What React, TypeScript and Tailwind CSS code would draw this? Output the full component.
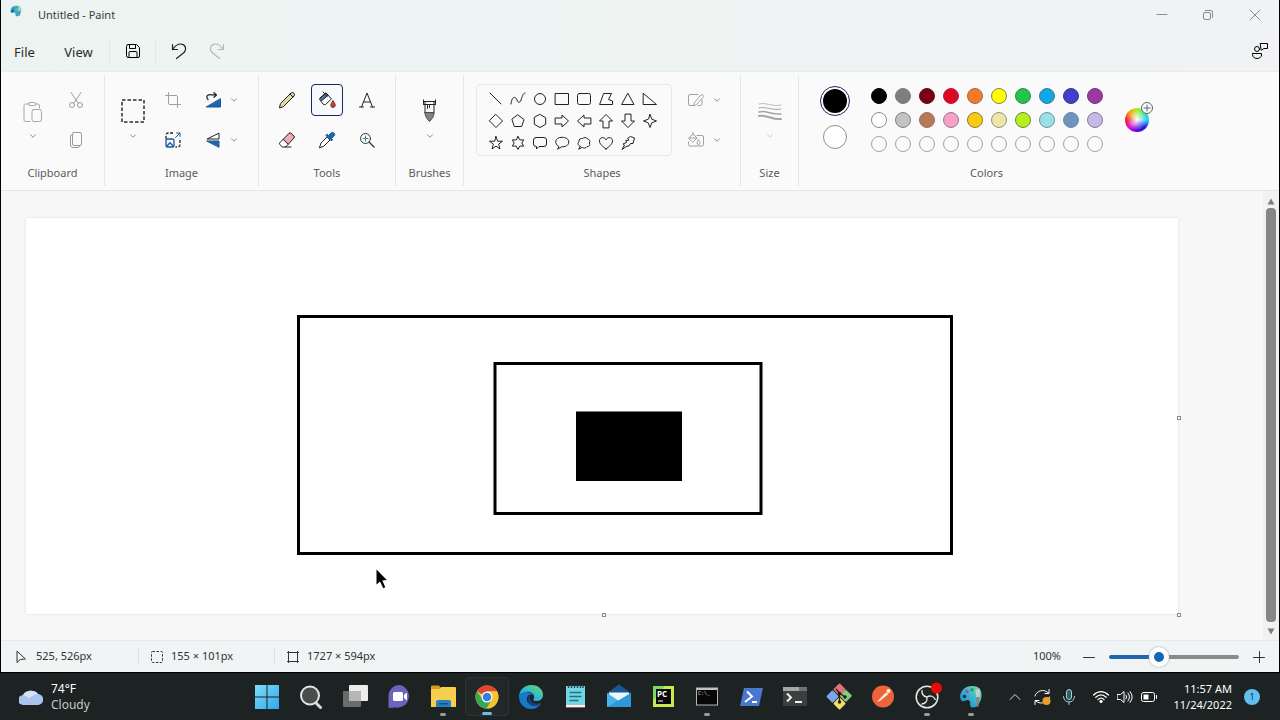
import { useState } from "react";
import type { ReactNode } from "react";
import { ChevronDown, ChevronUp } from "lucide-react";

interface DrawingProps {
  size?: number;
  box?: number;
  className?: string;
  children: ReactNode;
}

// Thin outline drawing, `box` is the side of the view box
function Drawing({ size = 16, box = 16, className = "", children }: DrawingProps) {
  return (
    <svg
      width={size}
      height={size}
      viewBox={`0 0 ${box} ${box}`}
      fill="none"
      stroke="currentColor"
      strokeWidth={1}
      strokeLinecap="round"
      strokeLinejoin="round"
      className={`shrink-0 ${className}`}
      aria-hidden="true"
    >
      {children}
    </svg>
  );
}

function Chevron({ muted = false }: { muted?: boolean }) {
  return (
    <ChevronDown
      size={10}
      strokeWidth={2}
      className={muted ? "text-[#c8c8c8]" : "text-[#777777]"}
      aria-hidden="true"
    />
  );
}

interface GroupProps {
  label: string;
  className: string;
  inset?: string;
  last?: boolean;
  children: ReactNode;
}

function Group({ label, className, inset = "", last, children }: GroupProps) {
  return (
    <section
      aria-label={label}
      className={`my-1 flex shrink-0 flex-col pt-1 ${last ? "" : "border-r border-[#e6e6e6]"} ${className}`}
    >
      <div className={`flex h-20 ${inset}`}>{children}</div>
      <div className="flex h-[26px] items-center justify-center text-[#5c5c5c]">{label}</div>
    </section>
  );
}

function Tool({ label, active, children }: { label: string; active?: boolean; children: ReactNode }) {
  return (
    <div className="flex h-10 w-10 items-center justify-center">
      <button
        type="button"
        aria-label={label}
        aria-pressed={active}
        className={`flex h-8 w-8 items-center justify-center rounded ${
          active ? "border border-[#1b2560] bg-[#f7f9fc]" : ""
        }`}
      >
        {children}
      </button>
    </div>
  );
}

function SplitTool({ label, children }: { label: string; children: ReactNode }) {
  return (
    <button type="button" aria-label={label} className="flex h-10 items-center gap-2 px-1">
      {children}
      <Chevron />
    </button>
  );
}

function TallTool({
  label,
  className,
  muted,
  children,
}: {
  label: string;
  className: string;
  muted?: boolean;
  children: ReactNode;
}) {
  return (
    <button
      type="button"
      aria-label={label}
      className={`flex flex-col items-center justify-end gap-2 pb-[19px] ${className}`}
    >
      {children}
      <Chevron muted={muted} />
    </button>
  );
}

const shapes: { name: string; d: string }[] = [
  { name: "Line", d: "M2 2 L13 13" },
  { name: "Curve", d: "M1 13 C2 5 5 5 7 9 C8 12 10 12 11 9 C12 6 13 2 15 2" },
  { name: "Oval", d: "M8 2.5 a5.5 5.5 0 1 1 0 11 a5.5 5.5 0 1 1 0 -11 Z" },
  { name: "Rectangle", d: "M1.5 2.5 H14.5 V13.5 H1.5 Z" },
  {
    name: "Rounded rectangle",
    d: "M3.5 2.5 H12.5 a2 2 0 0 1 2 2 V11.5 a2 2 0 0 1 -2 2 H3.5 a2 2 0 0 1 -2 -2 V4.5 a2 2 0 0 1 2 -2 Z",
  },
  { name: "Polygon", d: "M6 2.5 H13.5 L10.5 8.5 L14.5 10 V13.5 H2 Z" },
  { name: "Triangle", d: "M8 2.5 L14 13.5 H2 Z" },
  { name: "Right triangle", d: "M1.5 2.5 L14.5 13.5 H1.5 Z" },
  { name: "Diamond", d: "M8 1.5 L14.5 8 L8 14.5 L1.5 8 Z" },
  { name: "Pentagon", d: "M8 2 L14 6.5 L11.7 13.5 H4.3 L2 6.5 Z" },
  { name: "Hexagon", d: "M8 1.5 L13.7 4.7 V11.3 L8 14.5 L2.3 11.3 V4.7 Z" },
  { name: "Right arrow", d: "M1.5 5 H8 V2 L14.5 8 L8 14 V11 H1.5 Z" },
  { name: "Left arrow", d: "M14.5 5 H8 V2 L1.5 8 L8 14 V11 H14.5 Z" },
  { name: "Up arrow", d: "M5 14.5 V8 H1.5 L8 1.5 L14.5 8 H11 V14.5 Z" },
  { name: "Down arrow", d: "M5 1.5 V8 H1.5 L8 14.5 L14.5 8 H11 V1.5 Z" },
  { name: "Four-point star", d: "M8 1.5 L9.8 6.2 L14.5 8 L9.8 9.8 L8 14.5 L6.2 9.8 L1.5 8 L6.2 6.2 Z" },
  {
    name: "Five-point star",
    d: "M8 1.5 L9.6 6.2 H14.5 L10.6 9.2 L12 14 L8 11.1 L4 14 L5.4 9.2 L1.5 6.2 H6.4 Z",
  },
  {
    name: "Six-point star",
    d: "M8 1.5 L9.8 4.9 H13.7 L11.8 8 L13.7 11.1 H9.8 L8 14.5 L6.2 11.1 H2.3 L4.2 8 L2.3 4.9 H6.2 Z",
  },
  {
    name: "Rounded callout",
    d: "M4 2.5 H12 a2.5 2.5 0 0 1 2.5 2.5 V9 a2.5 2.5 0 0 1 -2.5 2.5 H7 L4.5 14 V11.5 H4 a2.5 2.5 0 0 1 -2.5 -2.5 V5 a2.5 2.5 0 0 1 2.5 -2.5 Z",
  },
  {
    name: "Oval callout",
    d: "M4.5 11.3 C0 9 0.5 2.3 8 2.3 C12 2.3 14.8 4.3 14.8 7 C14.8 10.5 11 12 7.5 11.8 L4 14 Z",
  },
  {
    name: "Cloud callout",
    d: "M4 11 C1.5 10.5 1.5 7.5 3 6.8 C2.5 4 5 3 6.5 3.6 C8 1.8 11 2.3 11.4 4 C13.5 4 14.5 6.5 13.4 8 C14.6 10 12.8 12 11 11.6 C10 13.6 7 13.2 6.4 12.2 L3 14 Z",
  },
  {
    name: "Heart",
    d: "M8 14 C5 11.5 1.5 9.5 1.5 5.8 C1.5 2 6.5 1.5 8 4.8 C9.5 1.5 14.5 2 14.5 5.8 C14.5 9.5 11 11.5 8 14 Z",
  },
  {
    name: "Lightning",
    d: "M8 3 L10.5 1.5 L14.5 3 L13 8.5 H10.5 L9 11 H7 L2 14.5 L4.5 10 L3 9 L6.5 7.5 L5.8 5.5 L8.5 5.2 Z",
  },
];

const swatches: { name: string; fill: string; ring: string }[] = [
  { name: "Black", fill: "bg-black", ring: "border-black" },
  { name: "Gray", fill: "bg-[#7f7f7f]", ring: "border-[#7a7a7a]" },
  { name: "Dark red", fill: "bg-[#7d0012]", ring: "border-[#5c1018]" },
  { name: "Red", fill: "bg-[#dc0628]", ring: "border-[#b32038]" },
  { name: "Orange", fill: "bg-[#f47a28]", ring: "border-[#9c6a40]" },
  { name: "Yellow", fill: "bg-[#ffff00]", ring: "border-[#86863c]" },
  { name: "Green", fill: "bg-[#24c44c]", ring: "border-[#3b8550]" },
  { name: "Turquoise", fill: "bg-[#14a6e4]", ring: "border-[#3e7d98]" },
  { name: "Indigo", fill: "bg-[#3f42c6]", ring: "border-[#34388e]" },
  { name: "Purple", fill: "bg-[#9c389e]", ring: "border-[#74347a]" },
  { name: "White", fill: "bg-white", ring: "border-[#8c8c8c]" },
  { name: "Light gray", fill: "bg-[#c3c3c3]", ring: "border-[#808080]" },
  { name: "Brown", fill: "bg-[#b47a5a]", ring: "border-[#a07058]" },
  { name: "Rose", fill: "bg-[#f7a0c8]", ring: "border-[#a07890]" },
  { name: "Gold", fill: "bg-[#fbcb14]", ring: "border-[#8f7c34]" },
  { name: "Light yellow", fill: "bg-[#eee5aa]", ring: "border-[#98937a]" },
  { name: "Lime", fill: "bg-[#b5f01e]", ring: "border-[#73883a]" },
  { name: "Light turquoise", fill: "bg-[#9ae0e8]", ring: "border-[#6d959c]" },
  { name: "Blue-gray", fill: "bg-[#7093bc]", ring: "border-[#6a89ad]" },
  { name: "Lavender", fill: "bg-[#c6b9e8]", ring: "border-[#837d9a]" },
];

const emptySlots = ["1", "2", "3", "4", "5", "6", "7", "8", "9", "10"];

function PaletteMark({ size }: { size: number }) {
  return (
    <svg width={size} height={size} viewBox="0 0 24 24" aria-hidden="true">
      <defs>
        <linearGradient id="palette" x1="0" y1="1" x2="1" y2="0">
          <stop offset="0" stopColor="#1b7fc4" />
          <stop offset="0.55" stopColor="#39b8d0" />
          <stop offset="1" stopColor="#7fe0a0" />
        </linearGradient>
      </defs>
      <path
        d="M13 1 C20 1 23 5 22.5 11 C22 18 18 23 13 22.5 C9.5 22 12.5 17.5 10 15.5 C8 14 6 17 3 16 C-1 14 1 1 13 1 Z"
        fill="url(#palette)"
      />
      <circle cx="5.5" cy="11.5" r="1.8" fill="#17335c" />
      <circle cx="8" cy="6.5" r="1.8" fill="#b8459a" />
      <circle cx="13" cy="4.7" r="1.7" fill="#2f9a56" />
      <path d="M16.5 5 L21 3.5 L20.5 12 H17 Z" fill="#c3cdd0" />
      <path d="M17.5 12 H20 L19.5 22 H18.2 Z" fill="#9a7a68" />
    </svg>
  );
}

function TitleBar() {
  return (
    <header className="flex h-[30px] shrink-0 items-center justify-between">
      <div className="flex items-center gap-4 pl-[9px]">
        <div className="-mt-2">
          <PaletteMark size={12} />
        </div>
        <h1 className="text-[11px] text-[#3a3a3a]">Untitled - Paint</h1>
      </div>
      <div className="flex text-[#8a8a8a]">
        <button type="button" aria-label="Minimize" className="flex h-[30px] w-[46px] items-center justify-center">
          <Drawing size={12} box={12}>
            <path d="M1 5.5 H11" />
          </Drawing>
        </button>
        <button type="button" aria-label="Restore" className="flex h-[30px] w-[46px] items-center justify-center">
          <Drawing size={12} box={12}>
            <rect x="1.5" y="3.5" width="7" height="7" rx="1.5" />
            <path d="M3.5 1.5 H9 Q10.5 1.5 10.5 3 V8.5" />
          </Drawing>
        </button>
        <button type="button" aria-label="Close" className="flex h-[30px] w-12 items-center justify-center">
          <Drawing size={12} box={12}>
            <path d="M1 1 L11 11 M11 1 L1 11" />
          </Drawing>
        </button>
      </div>
    </header>
  );
}

function MenuBar() {
  return (
    <nav className="flex h-[42px] shrink-0 items-center justify-between pr-[11px]">
      <div className="flex items-center text-[13px] text-[#2a2a2a]">
        <button type="button" className="w-[47px] pt-[3px]">
          File
        </button>
        <button type="button" className="w-[61px] pt-[3px]">
          View
        </button>
        <div className="flex h-6 w-[46px] items-center justify-center border-l border-[#e0e6e5]">
          <button type="button" aria-label="Save" className="text-black">
            <Drawing>
              <path d="M1.5 3 Q1.5 1.5 3 1.5 H11.5 L14.5 4.5 V13 Q14.5 14.5 13 14.5 H3 Q1.5 14.5 1.5 13 Z" />
              <path d="M4.5 1.5 V5.5 H10.5 V1.5 M4 14.5 V9.5 Q4 8.5 5 8.5 H11 Q12 8.5 12 9.5 V14.5" />
            </Drawing>
          </button>
        </div>
        <div className="flex h-6 items-center gap-[22px] border-l border-[#e0e6e5] pl-[15px]">
          <button type="button" aria-label="Undo" className="text-[#1f1f1f]">
            <Drawing>
              <path d="M1.5 1.5 V6.5 H6.5 M1.5 6.5 C4 3 7 1 9.5 1 C14.5 1 16 6 13 9.5 L5.5 15.5" strokeWidth="1.2" />
            </Drawing>
          </button>
          <button type="button" aria-label="Redo" className="text-[#b4b8b8]">
            <Drawing>
              <path d="M14.5 1.5 V6.5 H9.5 M14.5 6.5 C12 3 9 1 6.5 1 C1.5 1 0 6 3 9.5 L10.5 15.5" strokeWidth="1.2" />
            </Drawing>
          </button>
        </div>
      </div>
      <button type="button" aria-label="Account" className="text-black">
        <Drawing>
          <circle cx="5" cy="6" r="2.5" />
          <path d="M0.5 10.5 H9.5 V12 C9.5 14 7.5 15.5 5 15.5 C2.5 15.5 0.5 14 0.5 12 Z" />
          <path d="M8.5 0.5 H15.5 V5.5 H12 L9.5 7 Z" />
        </Drawing>
      </button>
    </nav>
  );
}

function Ribbon() {
  return (
    <div className="flex shrink-0 overflow-hidden border-b border-[#e6e6e6] bg-[#fafafa] text-[11px] shadow-[0_-1px_0_#e9eeed]">
      <Group label="Clipboard" className="w-[104px]" inset="pl-[9px]">
        <TallTool label="Paste" className="w-[46px]">
          <Drawing size={22} box={22} className="text-[#a6a6a6]">
            <path d="M8 20.5 H3.5 Q2 20.5 2 19 V4.5 Q2 3 3.5 3 H6.5 M14 3 H16 Q17.5 3 17.5 4.5 V7" />
            <rect x="6.5" y="1.5" width="7.5" height="3" rx="1.5" />
            <rect x="10" y="8.5" width="9.5" height="12" rx="2" />
          </Drawing>
        </TallTool>
        <div className="flex flex-col text-[#9c9c9c]">
          <Tool label="Cut">
            <Drawing size={18} box={18}>
              <path d="M4 1.5 L11.5 12.5 M14 1.5 L6.5 12.5" />
              <circle cx="5" cy="14" r="2.5" />
              <circle cx="13" cy="14" r="2.5" />
            </Drawing>
          </Tool>
          <Tool label="Copy">
            <Drawing>
              <rect x="4.5" y="0.5" width="9" height="13" rx="1.5" />
              <path d="M4.5 2.5 Q2.5 2.5 2.5 4.5 V13 Q2.5 15.5 5 15.5 H10 Q11.5 15.5 12 14" />
            </Drawing>
          </Tool>
        </div>
      </Group>

      <Group label="Image" className="w-[154px]" inset="pl-2">
        <TallTool label="Select" className="w-10">
          <Drawing size={24} box={24} className="text-[#2c2c2c]">
            <rect x="1" y="1" width="22" height="22" strokeWidth="1.5" strokeDasharray="3.5 2" strokeLinecap="butt" />
          </Drawing>
        </TallTool>
        <div className="flex flex-col">
          <Tool label="Crop">
            <Drawing className="text-[#a0a0a0]">
              <path d="M3.5 0.5 V11 Q3.5 12.5 5 12.5 H15.5 M0.5 3.5 H11 Q12.5 3.5 12.5 5 V15.5" />
            </Drawing>
          </Tool>
          <Tool label="Resize">
            <Drawing>
              <path
                d="M1 7 V3.5 Q1 1 3.5 1 H8 M15 8 V12.5 Q15 15 12.5 15 H10.5"
                stroke="#222222"
                strokeWidth="1.3"
                strokeDasharray="3 1.5"
                strokeLinecap="butt"
              />
              <path d="M10.5 5.5 L15 1 M11.5 1 H15 V4.5" stroke="#17599c" />
              <rect x="1" y="7" width="8" height="8" rx="1.5" stroke="#17599c" strokeWidth="1.3" />
              <path d="M1.5 14.5 L5 10.8 L8.5 14.5" stroke="#17599c" strokeWidth="1.3" />
            </Drawing>
          </Tool>
        </div>
        <div className="flex flex-col pl-2">
          <SplitTool label="Rotate">
            <Drawing>
              <path d="M1.5 15 H15.5 V7 Z" fill="#1b66ad" stroke="#1b5a98" />
              <path
                d="M3 7.5 C0 4 3.5 2 6.5 2.8 H11 M9 0.7 L11.5 3 L9 5.3"
                stroke="#222222"
                strokeWidth="1.2"
              />
            </Drawing>
          </SplitTool>
          <SplitTool label="Flip">
            <Drawing>
              <path d="M14 1.5 V7 H2.5 Z" stroke="#222222" />
              <path d="M14 15 V9 H2 Z" fill="#1b66ad" stroke="#1b5a98" />
            </Drawing>
          </SplitTool>
        </div>
      </Group>

      <Group label="Tools" className="w-[137px]" inset="pl-2">
        <div className="grid grid-cols-3">
          <Tool label="Pencil">
            <Drawing size={18} box={18}>
              <path
                d="M1.5 16.5 L2.5 12.5 L13 2 Q14.5 1 16 2.2 Q17 3.5 16 5 L5.5 15.5 Z"
                fill="#e2d7ac"
                stroke="#222222"
              />
              <path d="M12 3 L15 6" stroke="#222222" />
            </Drawing>
          </Tool>
          <Tool label="Fill" active>
            <Drawing size={18} box={18}>
              <path d="M2 7 L8 1.8 L13.5 8 L7.5 13.5 Q6 14 5 13 L2 9 Z" fill="#ffffff" stroke="#222222" />
              <path d="M2.5 7 L8 2 L10 4.3 L4 9.5 Z" fill="#3f7fb8" stroke="#222222" />
              <path d="M5 1 L9 5.5" stroke="#222222" />
              <path
                d="M15 10 C13.5 12 12.8 13 12.8 14.2 A2.2 2.2 0 0 0 17.2 14.2 C17.2 13 16.5 12 15 10 Z"
                fill="#b84832"
                stroke="#7c2c20"
              />
            </Drawing>
          </Tool>
          <Tool label="Text">
            <Drawing className="text-[#222222]">
              <path d="M2.5 15 L8 1 L13.5 15 M4.5 10 H11.5 M0.5 15 H4.5 M11.5 15 H15.5" />
            </Drawing>
          </Tool>
          <Tool label="Eraser">
            <Drawing size={18} box={18}>
              <path
                d="M5 8.5 L11 2.2 Q12 1.5 13 2.2 L16 5 Q16.8 6 16 7 L10 13.5 Z"
                fill="#f2abb5"
                stroke="#222222"
              />
              <path
                d="M5 8.5 L1.8 11.8 Q1 12.8 1.8 13.6 L4.3 16 H7.5 L10 13.5 Z M7 16 H13"
                fill="#ffffff"
                stroke="#222222"
              />
            </Drawing>
          </Tool>
          <Tool label="Color picker">
            <Drawing size={18} box={18}>
              <path d="M1.5 16.5 L3 12 L9 6 L12 9 L6 15 Z" fill="#ffffff" stroke="#222222" />
              <path
                d="M8 4.5 L13.5 10 L14.5 8.5 L13.5 7.5 L16 5 Q17.5 3.5 16 2 Q14.5 0.8 13 2 L10.5 4.5 L9.5 3.5 Z"
                fill="#1b66ad"
                stroke="#1b5a98"
              />
            </Drawing>
          </Tool>
          <Tool label="Magnifier">
            <Drawing className="text-[#333333]">
              <circle cx="6.5" cy="6.5" r="5" />
              <path d="M10.3 10.3 L15 15" strokeWidth="1.3" />
              <path d="M4 6.5 H9 M6.5 4 V9" stroke="#3a8193" />
            </Drawing>
          </Tool>
        </div>
      </Group>

      <Group label="Brushes" className="w-[68px]">
        <TallTool label="Brushes" className="w-full">
          <Drawing size={24} box={24} className="text-[#222222]">
            <path d="M5.5 1 V4.5 M17.5 1 V4.5 M5.5 2.5 H17.5" />
            <path d="M7 2.5 V14 M16 2.5 V14" />
            <path d="M9.5 6.5 V9.5 M11.5 6.5 V8.5" />
            <path d="M7 13.5 H16 C16 17.5 14 20 11.5 22.5 C9 20 7 17.5 7 13.5 Z" fill="#808080" stroke="#4a4a4a" />
            <path d="M5.5 5.5 H17.5" />
          </Drawing>
        </TallTool>
      </Group>

      <Group label="Shapes" className="w-[277px]" inset="pl-3">
        <div className="mt-1 grid h-[72px] grid-cols-8 content-start rounded border border-[#e8e8e8] pt-[3px] pr-[10px] pl-2">
          {shapes.map((shape) => (
            <button
              key={shape.name}
              type="button"
              aria-label={shape.name}
              className="flex h-[22px] w-[22px] items-center justify-center text-[#222222]"
            >
              <Drawing>
                <path d={shape.d} />
              </Drawing>
            </button>
          ))}
        </div>
        <div className="flex flex-col pl-3 text-[#a0a0a0]">
          <SplitTool label="Shape outline">
            <Drawing>
              <path d="M10 2.5 H2 Q0.5 2.5 0.5 4 V12 Q0.5 13.5 2 13.5 H5 M14 8 V12 Q14 13.5 12.5 13.5 H10" />
              <path d="M5.5 13.5 L6.5 10.5 L13 3 Q14.5 2 15.5 3.5 Q16 4.5 15 5.5 L8.5 12.5 Z" />
            </Drawing>
          </SplitTool>
          <SplitTool label="Shape fill">
            <Drawing>
              <path d="M9 3.5 H14 Q15.5 3.5 15.5 5 V12.5 Q15.5 14 14 14 H2 Q0.5 14 0.5 12.5 V10" />
              <path d="M1 6 L5 1.8 L9 6 L5 10 Z M1 6 H9 M5 0.5 V3" />
              <path d="M10.5 8 C9.5 9.5 9 10 9 11 A1.5 1.5 0 0 0 12 11 C12 10 11.5 9.5 10.5 8 Z" />
            </Drawing>
          </SplitTool>
        </div>
      </Group>

      <Group label="Size" className="w-[58px]">
        <TallTool label="Size" className="w-full" muted>
          <Drawing size={24} box={24} className="text-[#a4a4a4]">
            <path d="M1 5 C8 3 14 8 23 6" strokeWidth="0.7" />
            <path d="M1 9 C8 7 14 12 23 10" />
            <path d="M1 13 C8 11 14 16 23 15" strokeWidth="1.5" />
            <path d="M1 17 C8 15 14 21 23 20" strokeWidth="2" />
          </Drawing>
        </TallTool>
      </Group>

      <Group label="Colors" className="w-[375px]" last>
        <div className="flex w-[68px] flex-col items-center gap-[9px] pt-[6px] pl-1">
          <button
            type="button"
            aria-label="Color 1"
            className="flex h-[30px] w-[30px] items-center justify-center rounded-full border border-[#1b2560] bg-white"
          >
            <span className="h-6 w-6 rounded-full bg-black" />
          </button>
          <button type="button" aria-label="Color 2" className="h-6 w-6 rounded-full border border-[#8f8f8f] bg-white" />
        </div>
        <div className="grid grid-cols-10 content-start pt-1">
          {swatches.map((swatch) => (
            <div key={swatch.name} className="flex h-6 w-6 items-center justify-center">
              <button
                type="button"
                aria-label={swatch.name}
                className={`h-4 w-4 rounded-full border ${swatch.fill} ${swatch.ring}`}
              />
            </div>
          ))}
          {emptySlots.map((slot) => (
            <div key={slot} className="flex h-6 w-6 items-center justify-center">
              <button
                type="button"
                aria-label={`Custom color ${slot}`}
                className="h-4 w-4 rounded-full border border-[#a6a6a6]"
              />
            </div>
          ))}
        </div>
        <button type="button" aria-label="Edit colors" className="relative mt-[26px] ml-[18px] h-[26px] w-7">
          <span className="absolute bottom-0 left-0 h-6 w-6 rounded-full bg-[radial-gradient(circle,#ffffff_0%,#ffffff00_60%),conic-gradient(#a8f020,#30e890,#30c8f8,#1818d8,#5808d8,#e010d8,#f02030,#f8a018,#a8f020)]" />
          <span className="absolute -top-1 right-0 flex h-3 w-3 items-center justify-center rounded-full border border-[#666666] bg-[#fafafa] text-[#666666]">
            <Drawing size={8} box={8}>
              <path d="M4 1 V7 M1 4 H7" />
            </Drawing>
          </span>
        </button>
      </Group>
    </div>
  );
}

function Workspace() {
  return (
    <main className="flex min-h-0 flex-1 bg-[#f7f7f7]">
      <div className="min-w-0 flex-1 overflow-hidden pt-[27px] pr-[85px] pl-[25px]">
        <div className="relative bg-white shadow-[0_0_2px_#d8d8d8]">
          <svg viewBox="0 0 1152 396" className="block h-auto w-full" role="img" aria-label="Drawing canvas">
            <rect x="272.5" y="98.5" width="653" height="237" fill="none" stroke="#000000" strokeWidth="3" />
            <rect x="469" y="145.5" width="266" height="150" fill="none" stroke="#000000" strokeWidth="3" />
            <rect x="550" y="193.5" width="106" height="69.5" fill="#000000" />
            <path
              d="M350.5 351.5 V366.5 L354 363.5 L357.3 370.3 L359.3 369.3 L356.3 362.5 L360.8 362 Z"
              fill="#000000"
            />
          </svg>
          <span className="absolute top-1/2 -right-[3px] h-1 w-1 border border-[#8a8a8a] bg-white" />
          <span className="absolute -bottom-[3px] left-1/2 h-1 w-1 border border-[#8a8a8a] bg-white" />
          <span className="absolute -right-[3px] -bottom-[3px] h-1 w-1 border border-[#8a8a8a] bg-white" />
        </div>
      </div>
      <div className="flex w-4 shrink-0 flex-col items-center bg-[#f1f1f1] text-[#7d7d7d]">
        <button type="button" aria-label="Scroll up" className="flex h-[17px] items-center pt-1">
          <svg width="8" height="7" viewBox="0 0 8 7" aria-hidden="true">
            <path d="M4 0.5 L7.5 6.5 H0.5 Z" fill="currentColor" />
          </svg>
        </button>
        <div className="w-[10px] flex-1 rounded-sm bg-[#868686]" />
        <button type="button" aria-label="Scroll down" className="flex h-[18px] items-center">
          <svg width="8" height="7" viewBox="0 0 8 7" aria-hidden="true">
            <path d="M4 6.5 L7.5 0.5 H0.5 Z" fill="currentColor" />
          </svg>
        </button>
      </div>
    </main>
  );
}

function StatusBar() {
  const [zoom, setZoom] = useState(36);

  return (
    <footer className="flex h-8 shrink-0 items-center border-t border-[#e6e9e9] bg-[#f1f4f4] text-[11px] text-[#333333]">
      <div className="flex h-4 w-[138px] items-center gap-2 border-r border-[#dde0e0] pl-[13px]">
        <Drawing size={14} box={14}>
          <path d="M3 1.5 V12.5 L6.3 9.5 L11 9 Z" />
        </Drawing>
        525, 526px
      </div>
      <div className="flex h-4 w-[136px] items-center gap-2 border-r border-[#dde0e0] pl-3">
        <Drawing size={12} box={12}>
          <rect x="0.5" y="0.5" width="11" height="11" rx="1" strokeDasharray="2.5 1.5" strokeLinecap="butt" />
        </Drawing>
        155 × 101px
      </div>
      <div className="flex h-4 items-center gap-2 pl-3">
        <Drawing size={12} box={12}>
          <path d="M1.5 0.5 V11.5 M10.5 0.5 V11.5 M0.5 1.5 H11.5 M0.5 10.5 H11.5" />
        </Drawing>
        1727 × 594px
      </div>
      <div className="ml-auto flex items-center pr-[14px]">
        <span>100%</span>
        <button type="button" aria-label="Zoom out" className="ml-[22px]">
          <Drawing size={12} box={12}>
            <path d="M0.5 6.5 H11.5" />
          </Drawing>
        </button>
        <input
          type="range"
          aria-label="Zoom"
          min={0}
          max={100}
          value={zoom}
          onChange={(e) => setZoom(Number(e.target.value))}
          className="mr-[14px] ml-[14px] h-5 w-[130px] appearance-none bg-transparent [&::-webkit-slider-runnable-track]:h-1 [&::-webkit-slider-runnable-track]:rounded-full [&::-webkit-slider-runnable-track]:bg-[linear-gradient(90deg,#1f68ad_38%,#8a8a8a_38%)] [&::-webkit-slider-thumb]:-mt-2 [&::-webkit-slider-thumb]:h-5 [&::-webkit-slider-thumb]:w-5 [&::-webkit-slider-thumb]:appearance-none [&::-webkit-slider-thumb]:rounded-full [&::-webkit-slider-thumb]:border-[5px] [&::-webkit-slider-thumb]:border-white [&::-webkit-slider-thumb]:bg-[#1367b4] [&::-webkit-slider-thumb]:shadow-[0_0_2px_#999999]"
        />
        <button type="button" aria-label="Zoom in">
          <Drawing size={12} box={12}>
            <path d="M0.5 6.5 H11.5 M6.5 0.5 V11.5" />
          </Drawing>
        </button>
      </div>
    </footer>
  );
}

interface TaskbarApp {
  name: string;
  open?: boolean;
  active?: boolean;
  art: ReactNode;
}

const apps: TaskbarApp[] = [
  {
    name: "Start",
    art: (
      <path
        d="M0 0 H11.5 V11.5 H0 Z M12.5 0 H24 V11.5 H12.5 Z M0 12.5 H11.5 V24 H0 Z M12.5 12.5 H24 V24 H12.5 Z"
        fill="url(#start)"
      />
    ),
  },
  {
    name: "Search",
    art: (
      <>
        <path d="M16 17 L21.5 22.5" stroke="#d8dada" strokeWidth="3" strokeLinecap="round" />
        <circle cx="11" cy="10.5" r="9" fill="#4a4d4d" stroke="#e4e6e6" strokeWidth="2" />
      </>
    ),
  },
  {
    name: "Task view",
    art: (
      <>
        <rect x="6" y="0" width="19" height="16" rx="1" fill="#ececec" />
        <rect x="0" y="6" width="18" height="16" rx="1" fill="#6a6c6c" />
        <rect x="6" y="6" width="12" height="10" fill="#b5b6b6" />
      </>
    ),
  },
  {
    name: "Chat",
    art: (
      <>
        <path d="M12.5 0 A11 11 0 1 1 8.5 22.5 L1.5 23 V11 A11 11 0 0 1 12.5 0 Z" fill="#6b63bd" />
        <rect x="6" y="7" width="10" height="9" rx="1.5" fill="#ffffff" />
        <path d="M17 10 L20 7.5 V15.5 L17 13 Z" fill="#ffffff" />
      </>
    ),
  },
  {
    name: "File Explorer",
    open: true,
    art: (
      <>
        <path d="M0 1.5 Q0 0.5 1 0.5 H8 L10 3 V5 H0 Z" fill="#d89a1c" />
        <path d="M0 4 H8 L10.5 2 H24 Q25 2 25 3 V22 H0 Z" fill="#f6cf50" />
        <path d="M5 22 V17 Q5 15 7 15 H18 Q20 15 20 17 V22 Z" fill="#2580c4" />
        <rect x="8" y="18" width="9" height="1.5" fill="#12508c" />
      </>
    ),
  },
  {
    name: "Chrome",
    open: true,
    active: true,
    art: (
      <>
        <circle cx="12" cy="12" r="11.5" fill="#f4c430" />
        <path d="M12 12 L2 6.3 A11.5 11.5 0 0 1 22 6.3 H12 Z" fill="#df4436" />
        <path d="M2 6.3 L8 15 L12 23.5 A11.5 11.5 0 0 1 2 6.3 Z" fill="#3ba557" />
        <path d="M7 14.8 L12 12 L16.5 15 L11.5 23.5 A11.5 11.5 0 0 1 5 21 Z" fill="#3ba557" />
        <path d="M22 6.5 H12 V12 L17 15 L12 23.5 A11.5 11.5 0 0 0 22 6.5 Z" fill="#f4c430" />
        <circle cx="12" cy="12" r="5.5" fill="#ffffff" />
        <circle cx="12" cy="12" r="4.3" fill="#347fe4" />
      </>
    ),
  },
  {
    name: "Edge",
    art: (
      <>
        <path
          d="M0 12 A12 12 0 0 1 12 0 C20 0 24 5 24 10 C24 14 21 16 17 16 C14 16 14 14.5 15 13 C16 9 11 6 7 7 C3 8 0.5 10 0 12 Z"
          fill="url(#edge)"
        />
        <path
          d="M0 12 C1 7 10 5 14 10 C10 8 7 12 8 16 C10 21 17 21 22 18 C20 22 16 24 12 24 A12 12 0 0 1 0 12 Z"
          fill="#1979c6"
        />
        <path d="M11 10 C7 12 8 20 14 21 C17 21.5 20 20 22 18 C16 20 10 17 11 10 Z" fill="#12407c" />
      </>
    ),
  },
  {
    name: "Notepad",
    art: (
      <>
        <rect x="3" y="1" width="19" height="20" fill="#72d5e3" />
        <path
          d="M5.5 0 V3 M8.5 0 V3 M11.5 0 V3 M14.5 0 V3 M17.5 0 V3 M20 0 V3"
          stroke="#24424c"
          strokeWidth="1.3"
        />
        <path d="M6.5 7.5 H18.5 M6.5 11.5 H18.5 M6.5 15.5 H15.5" stroke="#257088" strokeWidth="1.5" />
        <rect x="3" y="20" width="19" height="2" fill="#f1f5f5" />
        <rect x="3" y="22" width="19" height="1" fill="#bf4a44" />
      </>
    ),
  },
  {
    name: "Mail",
    art: (
      <>
        <path d="M0 8 L12 -0.5 L24 8 V14 H0 Z" fill="#1b5798" />
        <path d="M2 7.5 H22 V17 H2 Z" fill="#eef6fa" />
        <path d="M0 8 L12 16 L24 8 V22 H0 Z" fill="#48b3ea" />
        <path d="M24 8 V22 H0 Z" fill="#2c9ad8" />
      </>
    ),
  },
  {
    name: "PyCharm",
    art: (
      <>
        <rect x="2" y="1" width="21" height="21" fill="#c8ea4c" />
        <path d="M2 1 H14 L2 16 Z" fill="#80d860" />
        <rect x="5" y="4" width="15" height="15" fill="#080a08" />
        <text x="6" y="12" fill="#ffffff" fontSize="8" fontWeight="700" fontFamily="Open Sans, sans-serif">
          PC
        </text>
        <rect x="7" y="15.5" width="5" height="1" fill="#ffffff" />
      </>
    ),
  },
  {
    name: "Command Prompt",
    open: true,
    art: (
      <>
        <rect x="1.5" y="3" width="21" height="17" fill="#080808" stroke="#b4b6b6" />
        <rect x="2" y="3" width="20" height="2" fill="#c0c2c2" />
        <text x="3" y="10" fill="#d8d8d8" fontSize="5" fontFamily="Liberation Mono, monospace">
          C:\_
        </text>
      </>
    ),
  },
  {
    name: "PowerShell ISE",
    art: (
      <>
        <path d="M5 3 H24 L20 21 H1 Z" fill="#4878d0" />
        <path d="M8 6.5 L13 11.5 L6 17 M13 17 H18" stroke="#ffffff" strokeWidth="2" fill="none" />
      </>
    ),
  },
  {
    name: "Terminal",
    art: (
      <>
        <rect x="0" y="2" width="24" height="19" rx="1" fill="#3c3f3f" />
        <path d="M0 2 H16 V6 H0 Z" fill="#a5a7a7" />
        <path d="M16 2 H24 V6 H16 Z" fill="#707272" />
        <path d="M4 8.5 L8 12.5 L4 16.5 M12 17 H19" stroke="#f0f0f0" strokeWidth="2" fill="none" />
      </>
    ),
  },
  {
    name: "Git Bash",
    art: (
      <>
        <rect x="8" y="0" width="9" height="9" rx="1" transform="rotate(45 12.5 4.5)" fill="#e0707c" />
        <rect x="1" y="7" width="9" height="9" rx="1" transform="rotate(45 5.5 11.5)" fill="#78a8e8" />
        <rect x="14" y="7" width="9" height="9" rx="1" transform="rotate(45 19.5 11.5)" fill="#88c87c" />
        <rect x="8" y="14" width="9" height="9" rx="1" transform="rotate(45 12.5 18.5)" fill="#f2dc6c" />
        <path d="M9 4 L12.5 8 V17 M12.5 8 L18 12" stroke="#2c1c1c" strokeWidth="1.3" fill="none" />
        <circle cx="12.5" cy="17" r="1.7" fill="#2c1c1c" />
        <circle cx="18" cy="12" r="1.7" fill="#2c1c1c" />
        <circle cx="12.5" cy="8.5" r="1.7" fill="#2c1c1c" />
      </>
    ),
  },
  {
    name: "Postman",
    art: (
      <>
        <circle cx="12" cy="11.5" r="11" fill="#ee6338" />
        <path d="M6 17 L8.5 14 L15 7.5 L17.5 9 L9.5 15.5 Z" fill="#fff1ea" />
        <circle cx="17.5" cy="6" r="2" fill="#fff1ea" />
      </>
    ),
  },
  {
    name: "OBS Studio",
    open: true,
    art: (
      <>
        <circle cx="12" cy="12" r="10.8" fill="#202424" stroke="#e6e8e8" strokeWidth="1.5" />
        <path
          d="M7 5 C6.5 9 8.5 11.5 12 12 C15 10 19 11 20.5 15 M12 12 C12.5 16 10.5 19 6.5 19"
          fill="none"
          stroke="#e6e8e8"
          strokeWidth="1.3"
        />
        <circle cx="21.5" cy="3" r="5.5" fill="#f00808" />
      </>
    ),
  },
];

function Taskbar() {
  return (
    <div className="flex h-12 shrink-0 border-t border-black bg-[#1d2222] text-[12px] leading-4 text-white">
      <button type="button" className="flex w-[245px] shrink-0 items-center gap-2 pl-[19px] text-left">
        <svg width="24" height="16" viewBox="0 0 24 16" aria-hidden="true">
          <path d="M6 16 A6 5 0 0 1 4 6 A8.5 7 0 0 1 19 5 A5.5 5.5 0 0 1 18.5 16 Z" fill="#a9c4ee" />
          <path d="M4 6 A8.5 7 0 0 1 19 5 C14 5 12 9 9 9 C7 6 5 7 4 6 Z" fill="#d3e2f8" />
        </svg>
        <span>
          <span className="block">74°F</span>
          <span className="block text-[#c4c8c8]">Cloudy</span>
        </span>
      </button>
      <nav aria-label="Apps" className="flex shrink-0">
        <svg width="0" height="0" className="absolute" aria-hidden="true">
          <defs>
            <linearGradient id="start" x1="0" y1="0" x2="1" y2="1">
              <stop offset="0" stopColor="#7fdcf8" />
              <stop offset="1" stopColor="#2ea8ee" />
            </linearGradient>
            <linearGradient id="edge" x1="0" y1="1" x2="1" y2="0">
              <stop offset="0" stopColor="#1d88d0" />
              <stop offset="0.5" stopColor="#34b8d0" />
              <stop offset="1" stopColor="#6cdc60" />
            </linearGradient>
          </defs>
        </svg>
        {apps.map((app) => (
          <button
            key={app.name}
            type="button"
            aria-label={app.name}
            className={`relative my-1 flex w-11 items-center justify-center rounded ${
              app.active ? "border border-[#2f3535] bg-[#222828]" : ""
            }`}
          >
            <svg width="24" height="24" viewBox="0 0 24 24" overflow="visible" aria-hidden="true">
              {app.art}
            </svg>
            {app.open && (
              <span
                className={`absolute bottom-0 left-1/2 h-[3px] -translate-x-1/2 rounded-full ${
                  app.active ? "w-[10px] bg-[#68bde0]" : "w-[6px] bg-[#9a9d9d]"
                }`}
              />
            )}
          </button>
        ))}
        <button type="button" aria-label="Paint" className="relative my-1 flex w-11 items-center justify-center">
          <PaletteMark size={24} />
          <span className="absolute bottom-0 left-1/2 h-[3px] w-[6px] -translate-x-1/2 rounded-full bg-[#9a9d9d]" />
        </button>
      </nav>
      <div className="ml-auto flex shrink-0 items-center pr-5">
        <button type="button" aria-label="Show hidden icons" className="mr-2">
          <ChevronUp size={20} strokeWidth={1} />
        </button>
        <button type="button" aria-label="Updates" className="mr-[10px]">
          <Drawing size={18} box={18}>
            <path d="M2 8 C3 3 11 0 15.5 5 M16 1.5 V5.5 H12 M16.5 9 C16 13 9 18 2.5 13 M2 16.5 V12.5 H6" />
            <circle cx="13.5" cy="13" r="4" fill="#eca02c" stroke="none" />
          </Drawing>
        </button>
        <button type="button" aria-label="Microphone" className="mr-4 text-[#9bd4dd]">
          <Drawing>
            <rect x="5.5" y="0.5" width="5" height="10" rx="2.5" fill="#3b5a60" />
            <path d="M2.5 7.5 C2.5 15 13.5 15 13.5 7.5 M8 13 V15.5" />
          </Drawing>
        </button>
        <button type="button" aria-label="Network, volume and battery" className="mr-4 flex items-center gap-2">
          <Drawing>
            <path
              d="M0.5 6 C5 1.5 11 1.5 15.5 6 M2.8 8.3 C6 5.3 10 5.3 13.2 8.3 M5 10.5 C7 8.7 9 8.7 11 10.5"
              strokeWidth="1.2"
            />
            <circle cx="8" cy="12.5" r="1.2" fill="currentColor" />
          </Drawing>
          <Drawing>
            <path d="M0.5 5.5 H3.5 L7 2.5 V13.5 L3.5 10.5 H0.5 Z M9 6 Q10.5 8 9 10 M11 4 Q14 8 11 12 M13 2.5 Q17.5 8 13 13.5" />
          </Drawing>
          <Drawing>
            <rect x="0.5" y="3.5" width="13" height="9" rx="2" />
            <rect x="2.5" y="5.5" width="5" height="5" fill="currentColor" stroke="none" />
            <path d="M15.5 6.5 V9.5" />
          </Drawing>
        </button>
        <button type="button" className="mr-3 text-right text-[11px]">
          <span className="block">11:57 AM</span>
          <span className="block">11/24/2022</span>
        </button>
        <button
          type="button"
          aria-label="1 notification"
          className="flex h-4 w-4 items-center justify-center rounded-full bg-[#62c0f0] text-[9px] text-[#16323c]"
        >
          1
        </button>
      </div>
    </div>
  );
}

export default function App() {
  return (
    <div className="flex h-screen flex-col overflow-hidden bg-[#1d2222] font-['Noto_Sans','Open_Sans',sans-serif]">
      <div className="flex min-h-0 flex-1 flex-col border-x border-black bg-linear-to-r from-[#ecf4f2] to-[#f0f2f3]">
        <TitleBar />
        <MenuBar />
        <Ribbon />
        <Workspace />
        <StatusBar />
      </div>
      <Taskbar />
    </div>
  );
}
